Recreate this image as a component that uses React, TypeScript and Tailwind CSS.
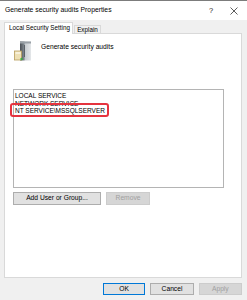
import React from "react";

function ServerIcon() {
  return (
    <svg width="20" height="20" viewBox="0 0 20 20">
      <defs>
        <linearGradient id="tw" x1="0" x2="1" y1="0" y2="0">
          <stop offset="0" stopColor="#4a4f55" />
          <stop offset="0.35" stopColor="#7d858c" />
          <stop offset="0.5" stopColor="#c9ced2" />
          <stop offset="1" stopColor="#e4e7e9" />
        </linearGradient>
      </defs>
      <rect x="8" y="0.5" width="11" height="19" fill="url(#tw)" />
      <rect x="8" y="0.5" width="11" height="2" fill="#9aa1a7" />
      <rect x="12" y="4" width="1" height="12" fill="#5b6268" />
      <rect x="2.5" y="10" width="7" height="9" fill="#eee0b4" stroke="#b79d5c" strokeWidth="0.8" />
      <rect x="3.5" y="11" width="5" height="2" fill="#f8f1da" />
      <circle cx="9.5" cy="18" r="1.2" fill="#3cb043" />
    </svg>
  );
}

export default function App() {
  const accounts = ["LOCAL SERVICE", "NETWORK SERVICE", "NT SERVICE\\MSSQLSERVER"];

  return (
    <div className="w-[247px] h-[300px] flex flex-col bg-[#f0f0f0] text-black overflow-hidden whitespace-nowrap font-['Liberation_Sans',Arial,sans-serif]">
      <div className="h-px bg-[#7c7c7c]" />

      {/* title bar */}
      <div className="h-[19px] bg-white flex items-center pl-[5px] text-[6.8px]">
        <span className="flex-1">Generate security audits Properties</span>
        <span className="w-[21px] text-[7.5px] text-[#222]">?</span>
        <svg width="8" height="8" viewBox="0 0 8 8" className="mr-[9px]">
          <path d="M0.5 0.5 L7.5 7.5 M7.5 0.5 L0.5 7.5" stroke="#333" strokeWidth="0.8" />
        </svg>
      </div>

      <div className="flex-1 flex flex-col pl-[4px] pr-[5px] pt-[2px]">
        {/* tabs */}
        <div className="relative z-10 flex items-end h-[12px] text-[6.3px]">
          <div className="w-[69px] h-[12px] bg-white border border-b-0 border-[#d9d9d9] flex items-center pl-[4px] pb-px">
            Local Security Setting
          </div>
          <div className="w-[27px] h-[8px] mb-px ml-px border border-b-0 border-[#d9d9d9] flex items-center justify-center">
            Explain
          </div>
        </div>

        {/* panel */}
        <div className="-mt-px h-[245px] bg-white border border-[#d9d9d9] flex flex-col pl-[7px]">
          <div className="flex items-start pt-[7px]">
            <ServerIcon />
            <span className="ml-[9px] mt-[1px] text-[6.7px]">Generate security audits</span>
          </div>

          <div className="relative mt-[28px] ml-px w-[211px] h-[99px] border border-[#b4b4b4] pt-[2px] pl-px text-[6.5px] leading-[7.5px]">
            {accounts.map((a) => (
              <div key={a}>{a}</div>
            ))}
            <div className="absolute left-[-4px] top-[13px] w-[99px] h-[14px] border-2 border-[#e5343f] rounded-[3px]" />
          </div>

          <div className="flex gap-[5px] mt-[4px] ml-px text-[6.7px]">
            <div className="w-[88px] h-[13px] bg-[#e1e1e1] border border-[#adadad] flex items-center justify-center">
              Add User or Group...
            </div>
            <div className="w-[44px] h-[13px] bg-[#d6d6d6] border border-[#cccccc] text-[#a0a0a0] flex items-center justify-center">
              Remove
            </div>
          </div>
        </div>

        {/* footer */}
        <div className="flex justify-end gap-[5px] mt-[5px] pl-[99px] text-[6.7px]">
          <div className="w-[43px] h-[12px] bg-[#e1e1e1] border border-[#0078d7] flex items-center justify-center">
            OK
          </div>
          <div className="w-[44px] h-[12px] bg-[#e1e1e1] border border-[#adadad] flex items-center justify-center">
            Cancel
          </div>
          <div className="w-[44px] h-[12px] bg-[#d6d6d6] border border-[#cccccc] text-[#a0a0a0] flex items-center justify-center">
            Apply
          </div>
        </div>
      </div>
    </div>
  );
}
